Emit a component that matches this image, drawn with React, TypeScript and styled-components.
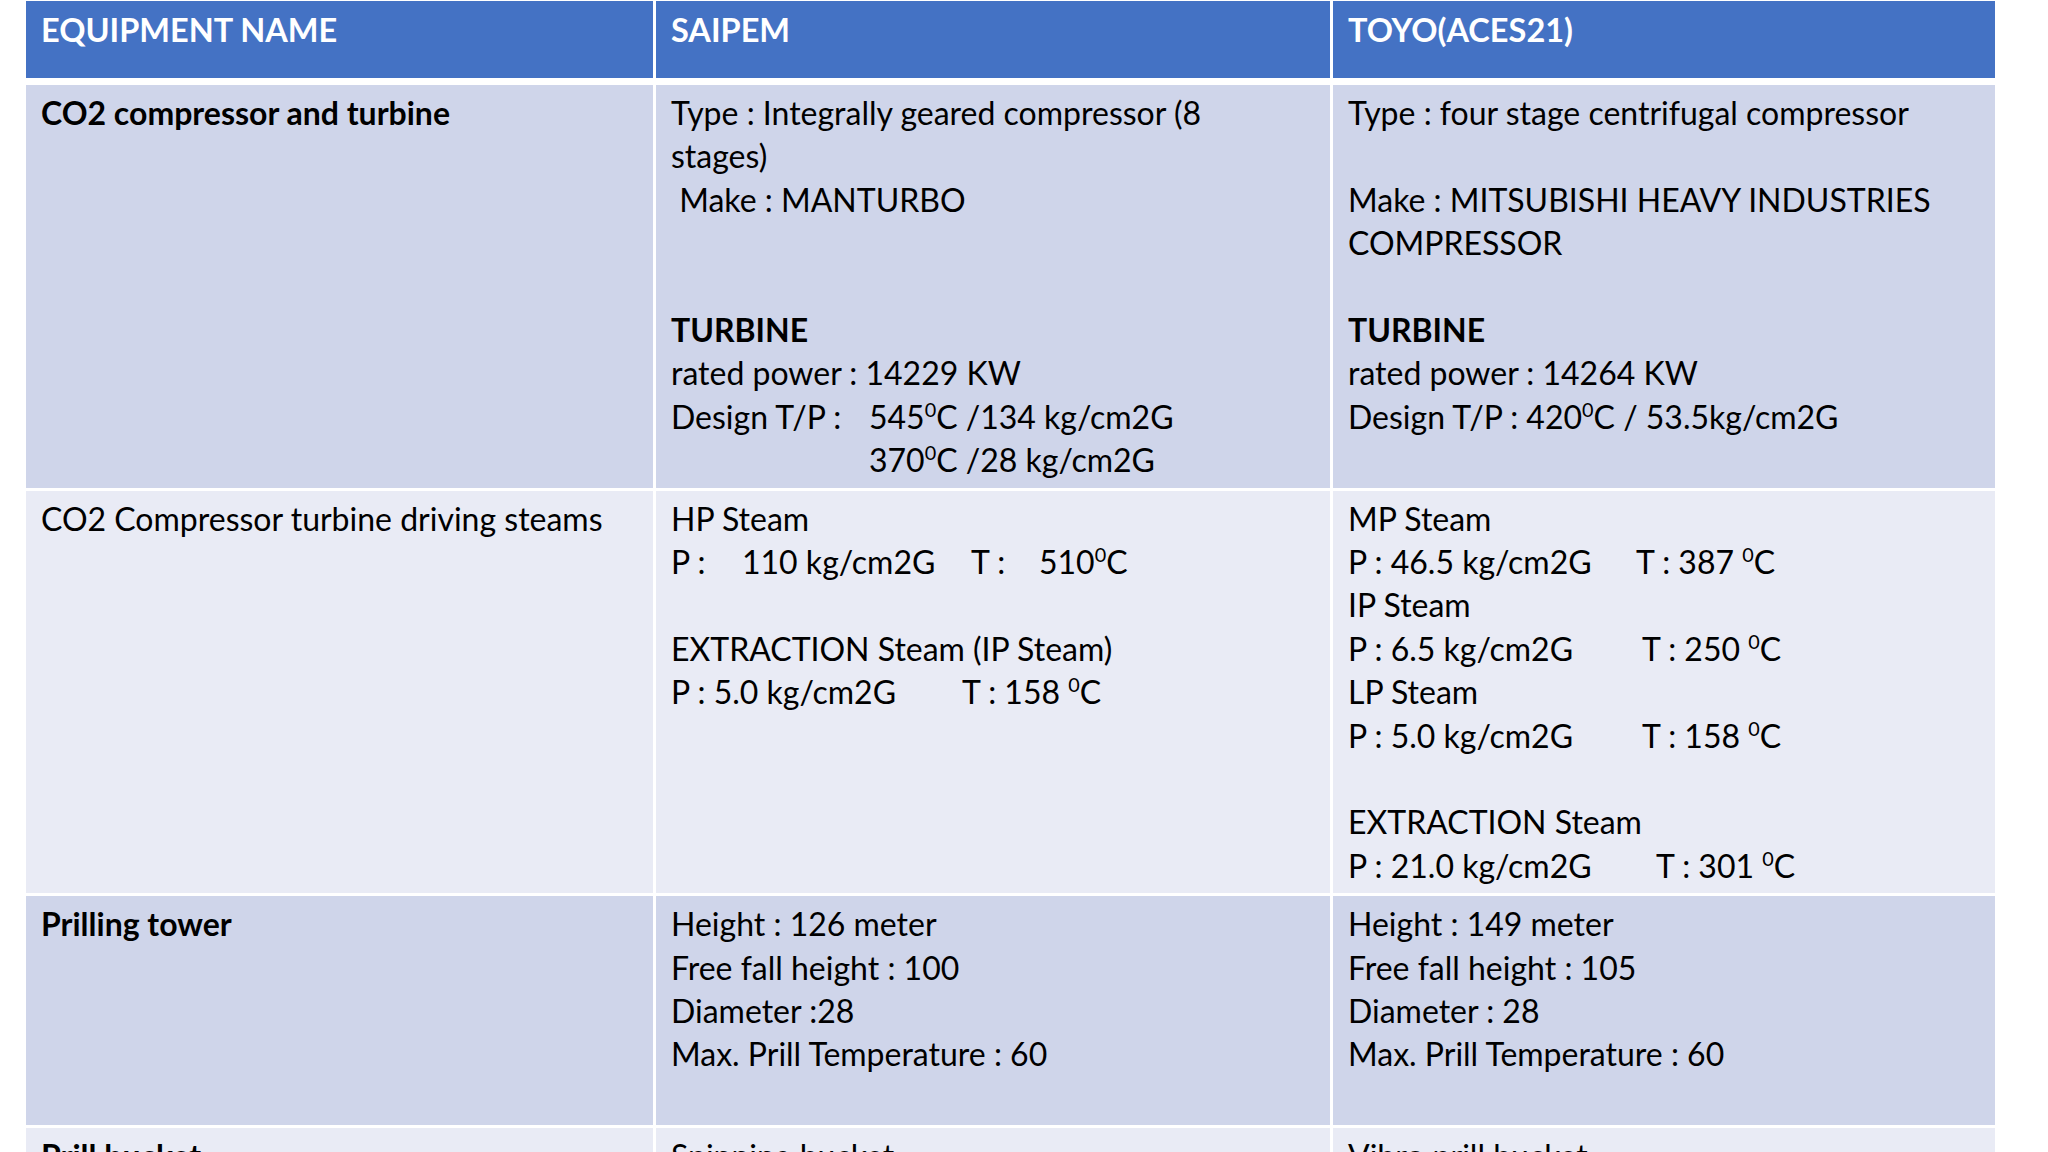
import { createGlobalStyle, styled } from 'styled-components';

const GlobalStyle = createGlobalStyle`
  html, body {
    margin: 0;
    padding: 0;
    overflow: hidden;
    background: #ffffff;
    font-family: 'Lato', 'Liberation Sans', sans-serif;
  }
`;

const Table = styled.div`
  display: flex;
  flex-direction: column;
  gap: 3px;
  width: 1969px;
  margin: 1px 0 0 26px;
`

const Row = styled.div<{ $head?: boolean }>`
  display: grid;
  grid-template-columns: 627px 674px 662px;
  column-gap: 3px;
  margin-bottom: ${p => (p.$head ? '4px' : '0')};
`

const HeadCell = styled.div`
  background: #4472c4;
  color: #ffffff;
  font-weight: 700;
  font-size: 32.5px;
  line-height: 43.4px;
  height: 77px;
  box-sizing: border-box;
  padding: 7px 15px 0;
`

const Cell = styled.div<{ $dark?: boolean }>`
  background: ${p => (p.$dark ? '#cfd5ea' : '#e9ebf5')};
  color: #000000;
  font-size: 32px;
  line-height: 43.4px;
  padding: 6px 15px 6px;
`

const Line = styled.div<{ $bold?: boolean }>`
  min-height: 43.4px;
  white-space: pre;
  font-weight: ${p => (p.$bold ? 700 : 400)};
`

const Tab = styled.span<{ $w: number }>`
  display: inline-block;
  width: ${p => p.$w}px;
`

const Sup = styled.sup`
  font-size: 0.62em;
  line-height: 0;
  vertical-align: 0.62em;
`

const Deg = () => <Sup>0</Sup>

function App() {
  return (
    <>
      <GlobalStyle />
      <Table>
        <Row $head>
          <HeadCell>EQUIPMENT NAME</HeadCell>
          <HeadCell>SAIPEM</HeadCell>
          <HeadCell>TOYO(ACES21)</HeadCell>
        </Row>

        <Row>
          <Cell $dark>
            <Line $bold>CO2 compressor and turbine</Line>
          </Cell>
          <Cell $dark>
            <Line>Type : Integrally geared compressor (8</Line>
            <Line>stages)</Line>
            <Line> Make : MANTURBO</Line>
            <Line />
            <Line />
            <Line $bold>TURBINE</Line>
            <Line>rated power : 14229 KW</Line>
            <Line>
              <Tab $w={198}>Design T/P :</Tab>545<Deg />C /134 kg/cm2G
            </Line>
            <Line>
              <Tab $w={198} />370<Deg />C /28 kg/cm2G
            </Line>
          </Cell>
          <Cell $dark>
            <Line>Type : four stage centrifugal compressor</Line>
            <Line />
            <Line>Make : MITSUBISHI HEAVY INDUSTRIES</Line>
            <Line>COMPRESSOR</Line>
            <Line />
            <Line $bold>TURBINE</Line>
            <Line>rated power : 14264 KW</Line>
            <Line>
              Design T/P : 420<Deg />C / 53.5kg/cm2G
            </Line>
          </Cell>
        </Row>

        <Row>
          <Cell>
            <Line>CO2 Compressor turbine driving steams</Line>
          </Cell>
          <Cell>
            <Line>HP Steam</Line>
            <Line>
              <Tab $w={71}>P :</Tab>
              <Tab $w={229}>110 kg/cm2G</Tab>
              <Tab $w={68}>T :</Tab>510<Deg />C
            </Line>
            <Line />
            <Line>EXTRACTION Steam (IP Steam)</Line>
            <Line>
              <Tab $w={291}>P : 5.0 kg/cm2G</Tab>T : 158 <Deg />C
            </Line>
          </Cell>
          <Cell>
            <Line>MP Steam</Line>
            <Line>
              <Tab $w={288}>P : 46.5 kg/cm2G</Tab>T : 387 <Deg />C
            </Line>
            <Line>IP Steam</Line>
            <Line>
              <Tab $w={294}>P : 6.5 kg/cm2G</Tab>T : 250 <Deg />C
            </Line>
            <Line>LP Steam</Line>
            <Line>
              <Tab $w={294}>P : 5.0 kg/cm2G</Tab>T : 158 <Deg />C
            </Line>
            <Line />
            <Line>EXTRACTION Steam</Line>
            <Line>
              <Tab $w={308}>P : 21.0 kg/cm2G</Tab>T : 301 <Deg />C
            </Line>
          </Cell>
        </Row>

        <Row>
          <Cell $dark>
            <Line $bold>Prilling tower</Line>
          </Cell>
          <Cell $dark>
            <Line>Height : 126 meter</Line>
            <Line>Free fall height : 100</Line>
            <Line>Diameter :28</Line>
            <Line>Max. Prill Temperature : 60</Line>
            <Line />
          </Cell>
          <Cell $dark>
            <Line>Height : 149 meter</Line>
            <Line>Free fall height : 105</Line>
            <Line>Diameter : 28</Line>
            <Line>Max. Prill Temperature : 60</Line>
            <Line />
          </Cell>
        </Row>

        <Row>
          <Cell>
            <Line $bold>Prill bucket</Line>
          </Cell>
          <Cell>
            <Line>Spinning bucket</Line>
          </Cell>
          <Cell>
            <Line>Vibro prill bucket</Line>
          </Cell>
        </Row>
      </Table>
    </>
  );
}

export default App
